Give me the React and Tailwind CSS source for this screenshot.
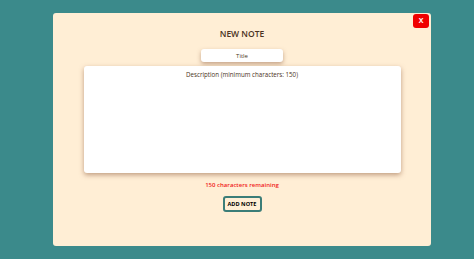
export default function App() {
  return (
    <div className="h-[259px] w-full bg-[#3b8a8b] pt-[13px] pl-[53px] font-['Open_Sans',sans-serif]">
      <div className="relative flex h-[233px] w-[378px] flex-col items-center rounded-[3px] bg-[#ffeed5]">
        {/* Close */}
        <button className="absolute right-[2px] top-[1px] flex h-[14px] w-[16px] items-center justify-center rounded-[3px] bg-[#f00000] text-[7px] font-bold text-white">
          X
        </button>

        <h2 className="mt-[16px] text-[8.5px] font-semibold leading-[10px] text-[#4a3222]">
          NEW NOTE
        </h2>

        <input
          placeholder="Title"
          className="mt-[10px] h-[13px] w-[82px] rounded-[3px] bg-white text-center text-[6px] font-medium text-[#4a3222] shadow-[0_2px_4px_rgba(140,90,60,0.5)] outline-none placeholder:text-[#4a3222]"
        />

        <textarea
          placeholder="Description (minimum characters: 150)"
          className="mt-[4px] h-[107px] w-[317px] resize-none rounded-[3px] bg-white pt-[4px] text-center text-[6.2px] font-medium text-[#4a3222] shadow-[0_2px_5px_rgba(140,90,60,0.55)] outline-none placeholder:text-[#4a3222]"
        />

        <p className="mt-[8px] text-[6px] font-semibold leading-[8px] text-[#f01a1a]">
          150 characters remaining
        </p>

        <button className="mt-[7px] flex h-[16px] w-[39px] items-center justify-center rounded-[3px] border-2 border-[#3b7d78] text-[5.6px] font-bold text-black">
          ADD NOTE
        </button>
      </div>
    </div>
  );
}
